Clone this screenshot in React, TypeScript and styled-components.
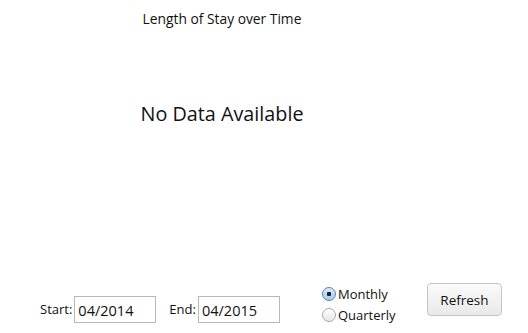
import styled, { createGlobalStyle } from "styled-components";

const GlobalStyle = createGlobalStyle`
    html, body {
        margin: 0;
        padding: 0;
        background: #ffffff;
    }
    body {
        font-family: "Open Sans", "DejaVu Sans", sans-serif;
        color: #111111;
    }
`;

const Page = styled.div`
    width: 528px;
    height: 333px;
    display: flex;
    flex-direction: column;
`;

const Chart = styled.div`
    width: 444px;
    height: 284px;
    display: flex;
    flex-direction: column;
    align-items: center;
`;

const Title = styled.div`
    margin-top: 10px;
    font-size: 13.8px;
    line-height: 18px;
`;

const NoData = styled.div`
    margin-top: 73px;
    font-size: 19.8px;
    line-height: 26px;
`;

const Controls = styled.div`
    display: flex;
    align-items: center;
    padding-left: 40px;
    font-size: 13px;
`;

const Field = styled.label<{ gap: number }>`
    display: flex;
    align-items: center;
    gap: 2px;
    margin-right: ${(p) => p.gap}px;
    margin-top: 9px;
`;

const DateInput = styled.input`
    box-sizing: border-box;
    width: 82px;
    height: 27px;
    border: 1px solid #b8b8b8;
    padding: 2px 3px 0;
    font-family: inherit;
    font-size: 14.5px;
    color: #111111;
    outline: none;
`;

const RadioGroup = styled.div`
    display: flex;
    flex-direction: column;
    gap: 1px;
    width: 80px;
    margin-right: 25px;
`;

const RadioRow = styled.label`
    display: flex;
    align-items: center;
    gap: 2px;
    line-height: 20px;
`;

const RadioDot = styled.span<{ checked?: boolean }>`
    box-sizing: border-box;
    width: 14px;
    height: 14px;
    border-radius: 50%;
    border: 1px solid ${(p) => (p.checked ? "#4a86c8" : "#a8a8a8")};
    background: ${(p) =>
        p.checked
            ? "radial-gradient(circle, #222 0 2px, transparent 2.5px), linear-gradient(#dbe9f8, #a9c9ee)"
            : "linear-gradient(#ffffff, #e6e6e6)"};
`;

const RefreshButton = styled.button`
    box-sizing: border-box;
    width: 75px;
    height: 33px;
    margin-top: -10px;
    border: 1px solid #c4c4c4;
    border-radius: 4px;
    background: linear-gradient(#fbfbfb, #e9e9e9);
    font-family: inherit;
    font-size: 13.5px;
    color: #111111;
`;

export default function App() {
    return (
        <Page>
            <GlobalStyle />
            <Chart>
                <Title>Length of Stay over Time</Title>
                <NoData>No Data Available</NoData>
            </Chart>
            <Controls>
                <Field gap={13}>
                    Start:<DateInput defaultValue="04/2014" />
                </Field>
                <Field gap={42}>
                    End:<DateInput defaultValue="04/2015" />
                </Field>
                <RadioGroup>
                    <RadioRow>
                        <RadioDot checked />
                        Monthly
                    </RadioRow>
                    <RadioRow>
                        <RadioDot />
                        Quarterly
                    </RadioRow>
                </RadioGroup>
                <RefreshButton>Refresh</RefreshButton>
            </Controls>
        </Page>
    );
}
